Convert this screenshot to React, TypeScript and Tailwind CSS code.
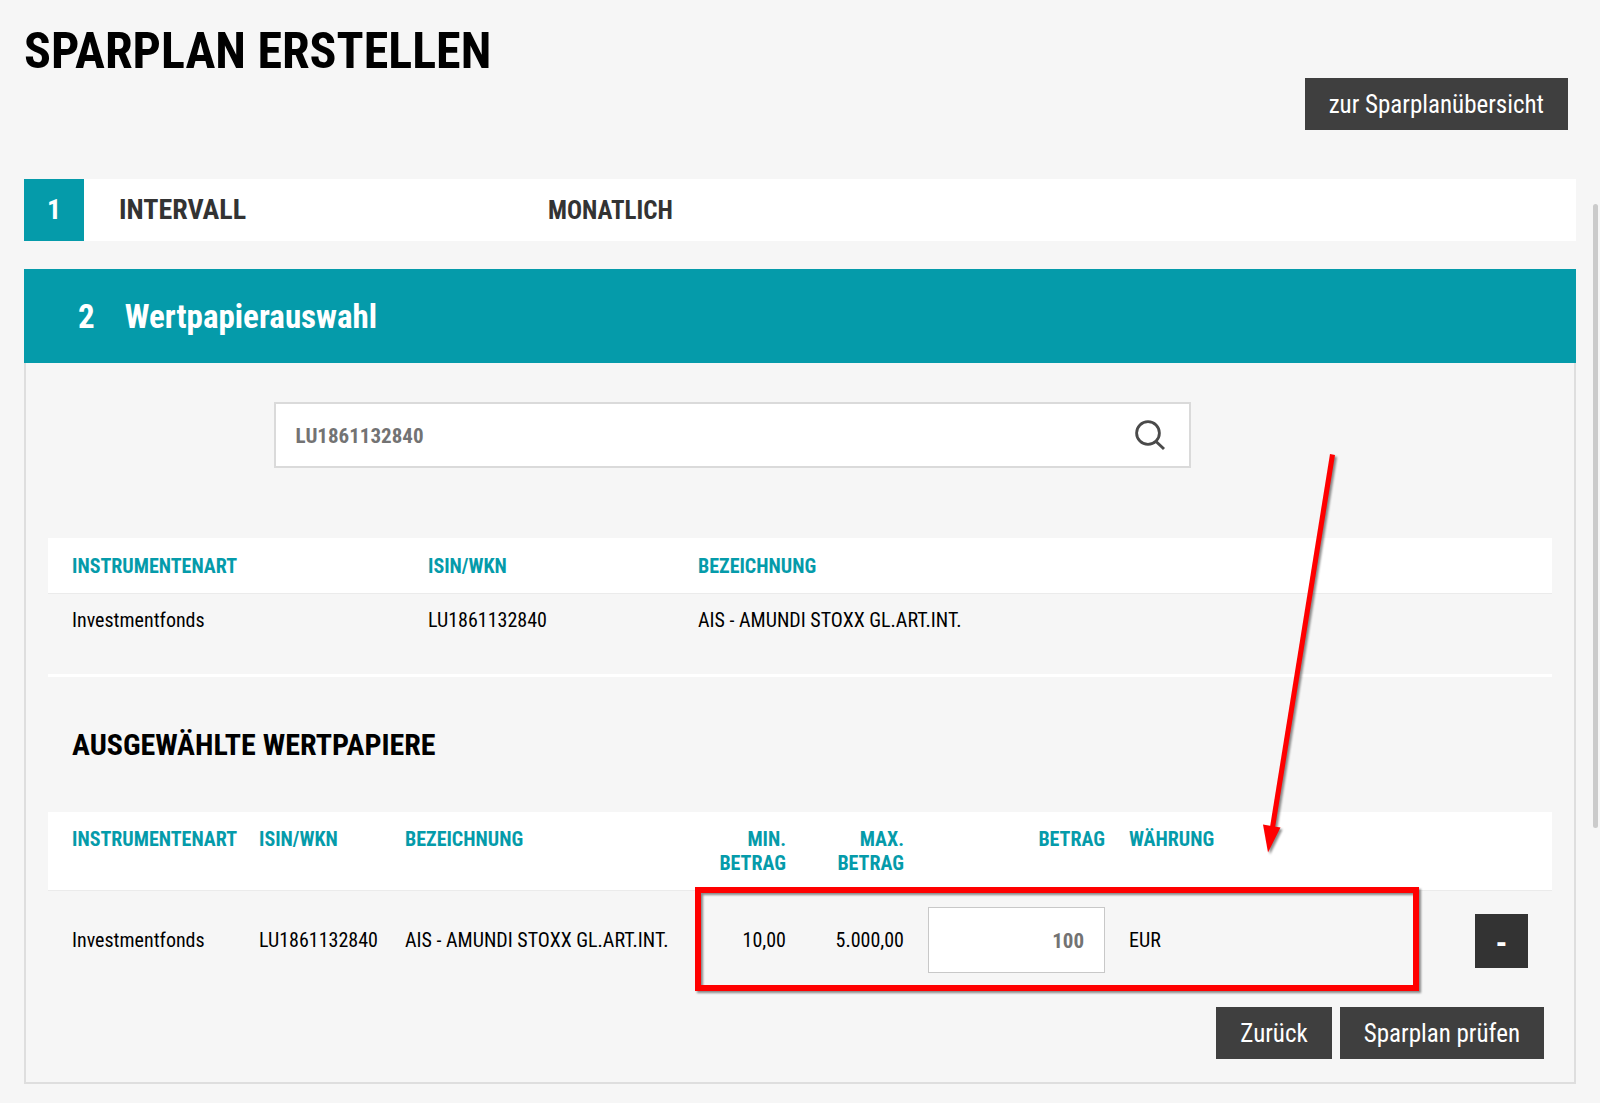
import { useState } from "react";

const positions = [
  {
    type: "Investmentfonds",
    isin: "LU1861132840",
    name: "AIS - AMUNDI STOXX GL.ART.INT.",
    min: "10,00",
    max: "5.000,00",
    currency: "EUR",
  },
];

const SearchIcon = () => (
  <svg
    className="h-8 w-8"
    viewBox="0 0 32 32"
    fill="none"
    stroke="#4a4a4a"
    strokeWidth="2.8"
    aria-hidden="true"
  >
    <circle cx="14" cy="14" r="11.4" />
    <path d="M21.5 22l8.5 8" strokeWidth="3" />
  </svg>
);

const Arrow = () => (
  <svg
    className="pointer-events-none absolute top-[184px] right-[236px] h-[408px] w-[84px] drop-shadow-[2px_2px_1px_rgba(0,0,0,0.45)]"
    viewBox="0 0 84 408"
    aria-hidden="true"
  >
    <path d="M74 1L79 2L19 375L14 374Z" fill="#ff0000" />
    <path d="M7 371.5L24.5 374.5L12 399.5Z" fill="#ff0000" />
  </svg>
);

const App = () => {
  const [query, setQuery] = useState("LU1861132840");
  const [amount, setAmount] = useState("100");

  return (
    <div className="relative min-h-screen bg-[#f6f6f6] px-6 pt-[21px] pb-5 font-['Roboto_Condensed',Roboto,sans-serif] text-black">
      <header>
        <h1 className="text-[50px] leading-[60px] font-bold">SPARPLAN ERSTELLEN</h1>
        <div className="-mt-[3px] flex justify-end pr-2">
          <a
            href="#uebersicht"
            className="bg-[#3f3f3f] px-6 pt-px text-[25px] leading-[51px] text-white"
          >
            zur Sparplanübersicht
          </a>
        </div>
      </header>

      <section className="mt-[49px] flex h-[62px] items-baseline bg-white leading-[62px] text-[#333]">
        <span className="w-[60px] bg-[#059baa] text-center text-[28px] font-bold text-white">
          1
        </span>
        <h2 className="w-[428px] pl-[35px] text-[28px] font-bold">INTERVALL</h2>
        <p className="pl-9 text-[25px] font-bold">MONATLICH</p>
      </section>

      <section className="relative mt-7">
        <h2 className="flex h-[94px] items-center gap-[30px] bg-[#059baa] pt-0.5 pl-[54px] text-[33px] font-bold text-white">
          <span>2</span>
          <span>Wertpapierauswahl</span>
        </h2>
        <div className="border-x-2 border-b-2 border-[#dedede] px-[22px] pt-[39px] pb-[23px]">
          <form
            className="ml-[15%] flex h-[66px] w-[61%] items-center border-2 border-[#dadada] bg-white pr-[23px]"
            onSubmit={(e) => e.preventDefault()}
          >
            <input
              className="h-full min-w-0 flex-1 px-5 pt-0.5 text-[21px] font-bold text-[#737373] outline-none"
              aria-label="Wertpapier suchen"
              type="text"
              value={query}
              onChange={(e) => setQuery(e.target.value)}
            />
            <button type="submit" aria-label="Suchen">
              <SearchIcon />
            </button>
          </form>

          <table className="mt-[70px] w-full table-fixed border-b-3 border-white text-left text-[20px] leading-6">
            <colgroup>
              <col className="w-[368px]" />
              <col className="w-[270px]" />
              <col />
            </colgroup>
            <thead className="border-b border-[#ebebeb] bg-white text-[#059baa]">
              <tr>
                <th className="pt-4 pb-[15px] pl-6">INSTRUMENTENART</th>
                <th className="px-3 pt-4 pb-[15px]">ISIN/WKN</th>
                <th className="px-3 pt-4 pb-[15px]">BEZEICHNUNG</th>
              </tr>
            </thead>
            <tbody>
              {positions.map((p) => (
                <tr key={p.isin}>
                  <td className="pt-[14px] pb-[42px] pl-6">{p.type}</td>
                  <td className="px-3 pt-[14px] pb-[42px]">{p.isin}</td>
                  <td className="px-3 pt-[14px] pb-[42px]">{p.name}</td>
                </tr>
              ))}
            </tbody>
          </table>

          <h3 className="mt-[50px] pl-6 text-[30px] leading-9 font-bold">AUSGEWÄHLTE WERTPAPIERE</h3>

          <div className="relative mt-[49px]">
            <table className="w-full table-fixed text-left text-[20px] leading-6">
              <colgroup>
                <col className="w-[199px]" />
                <col className="w-[146px]" />
                <col className="w-[292px]" />
                <col className="w-[113px]" />
                <col className="w-[118px]" />
                <col className="w-[201px]" />
                <col className="w-[120px]" />
                <col />
              </colgroup>
              <thead className="border-b border-[#ebebeb] bg-white text-[#059baa]">
                <tr>
                  <th className="py-[15px] pl-6 align-top">INSTRUMENTENART</th>
                  <th className="px-3 py-[15px] align-top">ISIN/WKN</th>
                  <th className="px-3 py-[15px] align-top">BEZEICHNUNG</th>
                  <th className="px-3 py-[15px] text-right align-top">
                    MIN.
                    <br />
                    BETRAG
                  </th>
                  <th className="px-3 py-[15px] text-right align-top">
                    MAX.
                    <br />
                    BETRAG
                  </th>
                  <th className="px-3 py-[15px] text-right align-top">BETRAG</th>
                  <th className="px-3 py-[15px] align-top">WÄHRUNG</th>
                  <td />
                </tr>
              </thead>
              <tbody>
                {positions.map((p) => (
                  <tr key={p.isin}>
                    <td className="pl-6">{p.type}</td>
                    <td className="px-3">{p.isin}</td>
                    <td className="px-3">{p.name}</td>
                    <td className="px-3 text-right">{p.min}</td>
                    <td className="px-3 text-right">{p.max}</td>
                    <td className="px-3 py-4">
                      <input
                        className="block h-[66px] w-full border border-[#c8c8c8] bg-white px-5 pt-0.5 text-right text-[21px] font-bold text-[#737373] outline-none"
                        aria-label="Betrag"
                        type="text"
                        value={amount}
                        onChange={(e) => setAmount(e.target.value)}
                      />
                    </td>
                    <td className="px-3">{p.currency}</td>
                    <td className="pr-6 text-right">
                      <button
                        type="button"
                        aria-label="Entfernen"
                        className="mt-0.5 h-[54px] w-[53px] bg-[#333] pt-1 text-[33px] font-bold text-white"
                      >
                        -
                      </button>
                    </td>
                  </tr>
                ))}
              </tbody>
            </table>
            <div className="pointer-events-none absolute top-[75px] left-[647px] h-[104px] w-[724px] border-6 border-[#ff0000] drop-shadow-[2px_2px_1px_rgba(0,0,0,0.45)]" />
          </div>

          <div className="mt-[18px] flex justify-end gap-2 pr-2">
            <button
              type="button"
              className="bg-[#3f3f3f] px-6 pt-px text-[25px] leading-[51px] text-white"
            >
              Zurück
            </button>
            <button
              type="button"
              className="bg-[#3f3f3f] px-6 pt-px text-[25px] leading-[51px] text-white"
            >
              Sparplan prüfen
            </button>
          </div>
        </div>
        <Arrow />
      </section>

      <div className="absolute top-[204px] right-0.5 h-[624px] w-[5px] rounded-full bg-[#cbcbcb]" />
    </div>
  );
};

export default App;
